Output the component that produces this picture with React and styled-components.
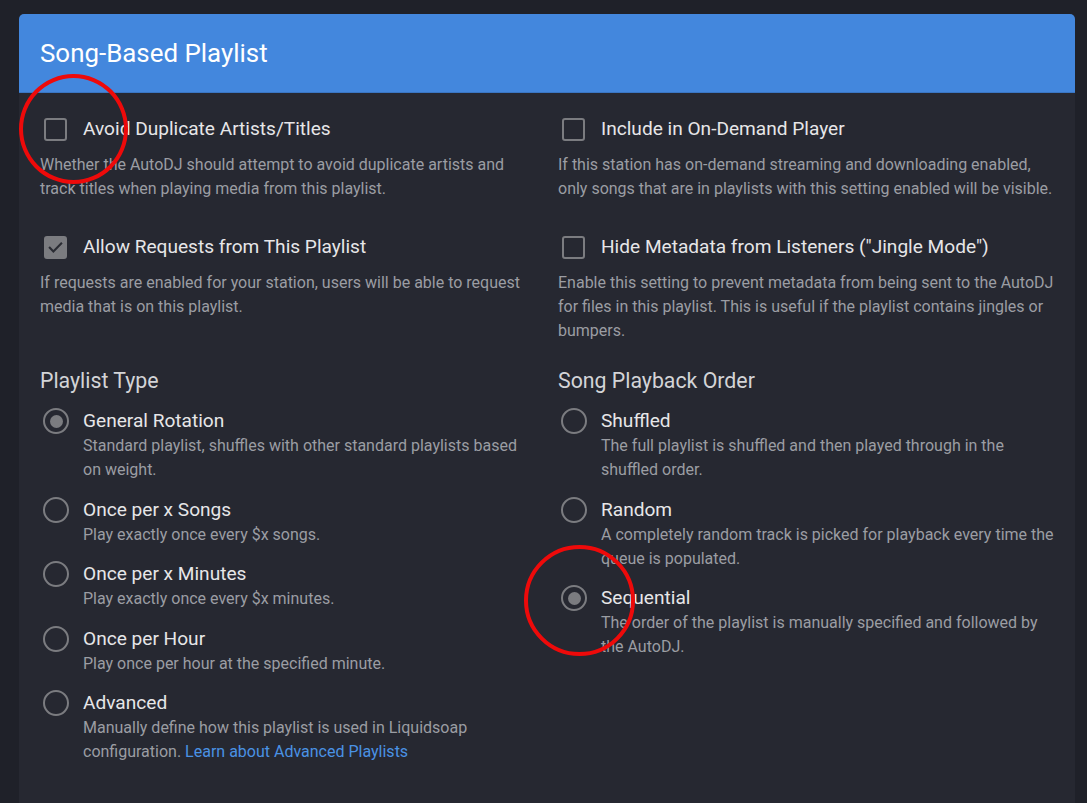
import React from "react";
import styled, { createGlobalStyle } from "styled-components";

const GlobalStyle = createGlobalStyle`
  html, body {
    margin: 0;
    padding: 0;
    background: #1f2129;
    font-family: Roboto, "Noto Sans", "Liberation Sans", sans-serif;
    -webkit-font-smoothing: antialiased;
  }
  * { box-sizing: border-box; }
`;

const Page = styled.div`
  position: relative;
  min-height: 803px;
  padding: 14px 12px 0 19px;
  background: #1f2129;
`;

const Card = styled.section`
  width: 1056px;
  background: #262831;
  border-radius: 5px 5px 0 0;
  overflow: hidden;
  min-height: 789px;
`;

const CardHeader = styled.header`
  height: 79px;
  display: flex;
  align-items: center;
  padding: 0 21px 1px;
  background: #4387dd;
  border-bottom: 1px solid #3a76c3;
`;

const Title = styled.h2`
  margin: 0;
  font-size: 25.9px;
  font-weight: 400;
  color: #ffffff;
`;

const CardBody = styled.div`
  padding: 20px 20px 40px 21px;
`;

const TwoCols = styled.div`
  display: grid;
  grid-template-columns: 497px 497px;
  column-gap: 21px;
  row-gap: ${(p) => p.$rowGap || 0}px;
  margin-top: ${(p) => p.$top || 0}px;
  align-items: start;
`;

const Field = styled.div`
  display: flex;
  flex-direction: column;
`;

const CheckRow = styled.label`
  display: flex;
  align-items: center;
  height: 32px;
`;

const CheckBox = styled.span`
  width: 23px;
  height: 23px;
  margin: 0 16px 0 4px;
  border-radius: 3px;
  border: 2px solid #7b7c80;
  background: ${(p) => (p.$checked ? "#7b7c80" : "transparent")};
  display: flex;
  align-items: center;
  justify-content: center;
  flex: none;
`;

const LabelText = styled.span`
  font-size: 19.1px;
  line-height: ${(p) => p.$lh || 26}px;
  color: #e6e6e8;
`;

const Description = styled.p`
  margin: ${(p) => p.$top || 0}px 0 0;
  font-size: 16px;
  line-height: 24px;
  color: #9b9da3;
`;

const Link = styled.a`
  color: #4a92e4;
  text-decoration: none;
`;

const GroupTitle = styled.h3`
  margin: 0 0 13px;
  font-size: 21.3px;
  line-height: 28px;
  font-weight: 400;
  color: #d3d4d7;
`;

const RadioList = styled.div`
  display: flex;
  flex-direction: column;
  gap: 14.6px;
`;

const RadioItem = styled.label`
  display: grid;
  grid-template-columns: 43px 1fr;
  align-items: start;
`;

const RadioCircle = styled.span`
  width: 26px;
  height: 26px;
  margin-left: 3px;
  border-radius: 50%;
  border: 2.6px solid #7b7c80;
  display: flex;
  align-items: center;
  justify-content: center;
  &::after {
    content: "";
    width: 13px;
    height: 13px;
    border-radius: 50%;
    background: ${(p) => (p.$checked ? "#7b7c80" : "transparent")};
  }
`;

const RadioText = styled.div`
  display: flex;
  flex-direction: column;
`;

const Annotation = styled.span`
  position: absolute;
  border: 4px solid #ee0a0a;
  border-radius: 50%;
  pointer-events: none;
`;

const Check = () => (
  <svg width="17" height="17" viewBox="0 0 24 24" fill="none">
    <path d="M4 12.5l5 5L20 6.5" stroke="#2a2c33" strokeWidth="3" strokeLinecap="square" />
  </svg>
);

const CheckField = ({ checked, label, children }) => (
  <Field>
    <CheckRow>
      <CheckBox $checked={checked}>{checked && <Check />}</CheckBox>
      <LabelText $lh={32}>{label}</LabelText>
    </CheckRow>
    <Description $top={8}>{children}</Description>
  </Field>
);

const Radio = ({ checked, label, children }) => (
  <RadioItem>
    <RadioCircle $checked={checked} />
    <RadioText>
      <LabelText>{label}</LabelText>
      <Description>{children}</Description>
    </RadioText>
  </RadioItem>
);

export default function App() {
  return (
    <>
      <GlobalStyle />
      <Page>
        <Card>
          <CardHeader>
            <Title>Song-Based Playlist</Title>
          </CardHeader>
          <CardBody>
            <TwoCols $rowGap={30}>
              <CheckField label="Avoid Duplicate Artists/Titles">
                Whether the AutoDJ should attempt to avoid duplicate artists and track titles when playing media from this playlist.
              </CheckField>
              <CheckField label="Include in On-Demand Player">
                If this station has on-demand streaming and downloading enabled, only songs that are in playlists with this setting enabled will be visible.
              </CheckField>
              <CheckField checked label="Allow Requests from This Playlist">
                If requests are enabled for your station, users will be able to request media that is on this playlist.
              </CheckField>
              <CheckField label={'Hide Metadata from Listeners ("Jingle Mode")'}>
                Enable this setting to prevent metadata from being sent to the AutoDJ for files in this playlist. This is useful if the playlist contains jingles or bumpers.
              </CheckField>
            </TwoCols>
            <TwoCols $top={24}>
              <div>
                <GroupTitle>Playlist Type</GroupTitle>
                <RadioList>
                  <Radio checked label="General Rotation">
                    Standard playlist, shuffles with other standard playlists based on weight.
                  </Radio>
                  <Radio label="Once per x Songs">Play exactly once every $x songs.</Radio>
                  <Radio label="Once per x Minutes">Play exactly once every $x minutes.</Radio>
                  <Radio label="Once per Hour">Play once per hour at the specified minute.</Radio>
                  <Radio label="Advanced">
                    Manually define how this playlist is used in Liquidsoap configuration.{" "}
                    <Link href="#">Learn about Advanced Playlists</Link>
                  </Radio>
                </RadioList>
              </div>
              <div>
                <GroupTitle>Song Playback Order</GroupTitle>
                <RadioList>
                  <Radio label="Shuffled">
                    The full playlist is shuffled and then played through in the shuffled order.
                  </Radio>
                  <Radio label="Random">
                    A completely random track is picked for playback every time the queue is populated.
                  </Radio>
                  <Radio checked label="Sequential">
                    The order of the playlist is manually specified and followed by the AutoDJ.
                  </Radio>
                </RadioList>
              </div>
            </TwoCols>
          </CardBody>
        </Card>
        <Annotation style={{ left: 19, top: 74, width: 109, height: 110 }} />
        <Annotation style={{ left: 524, top: 545, width: 111, height: 111 }} />
      </Page>
    </>
  );
}
